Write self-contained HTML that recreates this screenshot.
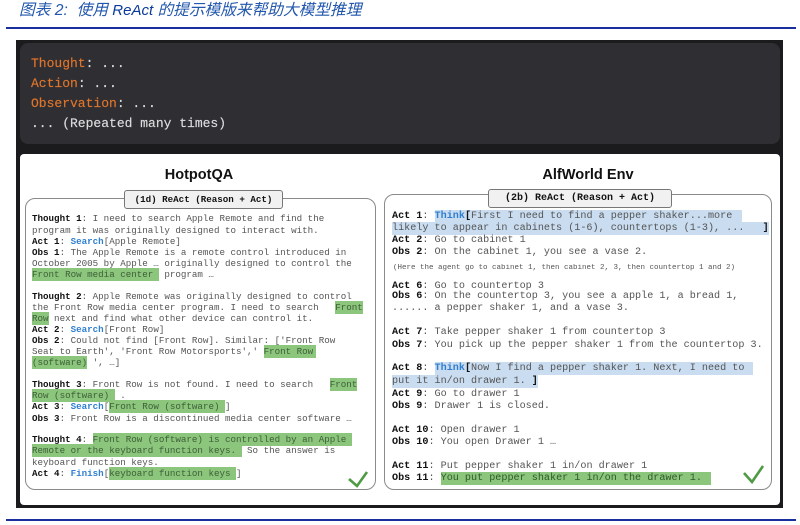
<!DOCTYPE html>
<html><head><meta charset="utf-8">
<style>
html,body{margin:0;padding:0;background:#fff}
#p{position:relative;width:800px;height:525px;overflow:hidden;background:#fff;font-family:"Liberation Mono",monospace}
#p div{position:absolute}
.t{white-space:pre;color:#555;filter:blur(.3px)}
.l{font-size:9.2px;line-height:11px;height:11px;left:32px}
.r{font-size:10.15px;line-height:12px;height:12px;left:392px}
b{color:#111}
i{font-style:normal;font-weight:bold;color:#2f7fd0}
u{text-decoration:none;background:#8cc57c;color:#3d5f38;padding:1px 0}
s{text-decoration:none;background:#c9dcf0;padding:1px 0}
.c{left:31px;font-size:13px;line-height:20px;color:#dedede;white-space:pre;-webkit-text-stroke:.15px}
.c em{font-style:normal;color:#e0752a}
</style></head><body><div id="p">
<div style="left:19px;top:0px;font:italic 15.7px/22px 'Liberation Sans','Noto Sans CJK SC',sans-serif;color:#2257ad;white-space:pre">图表 2:  使用 <span style="color:#0a3a9c;font-size:15px">ReAct</span> 的提示模版来帮助大模型推理</div>
<div style="left:6px;top:27px;width:790px;height:2px;background:#1a2f9e"></div>
<div style="left:6px;top:519px;width:790px;height:2px;background:#1a2f9e"></div>

<div style="left:16px;top:40px;width:767px;height:468px;background:#1b1b1d"></div>
<div style="left:20px;top:43px;width:760px;height:101px;background:#2e2e33;border-radius:8px"></div>
<div class="c" style="top:54px"><em>Thought</em>: ...
<em>Action</em>: ...
<em>Observation</em>: ...
... (Repeated many times)</div>

<div style="left:20px;top:154px;width:760px;height:351px;background:#fff;border-radius:4px"></div>

<div style="left:0;width:398px;top:166px;text-align:center;font:bold 14.5px/18px 'Liberation Sans',sans-serif;color:#111">HotpotQA</div>
<div style="left:398px;width:380px;top:166px;text-align:center;font:bold 14.6px/18px 'Liberation Sans',sans-serif;color:#111">AlfWorld Env</div>

<div style="left:25px;top:198px;width:349px;height:290px;border:1.5px solid #8a8a8a;border-radius:10px;box-sizing:content-box"></div>
<div style="left:384px;top:194px;width:386px;height:294px;border:1.5px solid #8a8a8a;border-radius:10px"></div>

<div style="left:124px;top:190px;width:157px;height:17px;background:#f1f1f1;border:1.5px solid #777;border-radius:3px;text-align:center;font:bold 9.2px/17px 'Liberation Mono',monospace;color:#111">(1d) ReAct (Reason + Act)</div>
<div style="left:488px;top:189px;width:182px;height:17px;background:#f1f1f1;border:1.5px solid #777;border-radius:3px;text-align:center;font:bold 10px/17px 'Liberation Mono',monospace;color:#111">(2b) ReAct (Reason + Act)</div>

<div class="t l" style="top:213px"><b>Thought 1</b>: I need to search Apple Remote and find the</div>
<div class="t l" style="top:225px">program it was originally designed to interact with.</div>
<div class="t l" style="top:236px"><b>Act 1</b>: <i>Search</i>[Apple Remote]</div>
<div class="t l" style="top:247px"><b>Obs 1</b>: The Apple Remote is a remote control introduced in</div>
<div class="t l" style="top:258px">October 2005 by Apple … originally designed to control the</div>
<div class="t l" style="top:269px"><u>Front Row media center </u> program …</div>

<div class="t l" style="top:291px"><b>Thought 2</b>: Apple Remote was originally designed to control</div>
<div class="t l" style="top:302px">the Front Row media center program. I need to search   <u>Front</u></div>
<div class="t l" style="top:313px"><u>Row</u> next and find what other device can control it.</div>
<div class="t l" style="top:324px"><b>Act 2</b>: <i>Search</i>[Front Row]</div>
<div class="t l" style="top:335px"><b>Obs 2</b>: Could not find [Front Row]. Similar: ['Front Row</div>
<div class="t l" style="top:346px">Seat to Earth', 'Front Row Motorsports',' <u style="padding-right:3px">Front Row</u></div>
<div class="t l" style="top:357px"><u>(software)</u> ', …]</div>

<div class="t l" style="top:379px"><b>Thought 3</b>: Front Row is not found. I need to search   <u>Front</u></div>
<div class="t l" style="top:390px"><u>Row (software) </u> .</div>
<div class="t l" style="top:401px"><b>Act 3</b>: <i>Search</i>[<u>Front Row (software) </u>]</div>
<div class="t l" style="top:413px"><b>Obs 3</b>: Front Row is a discontinued media center software …</div>

<div class="t l" style="top:434px"><b>Thought 4</b>: <u>Front Row (software) is controlled by an Apple </u></div>
<div class="t l" style="top:445px"><u>Remote or the keyboard function keys. </u> So the answer is</div>
<div class="t l" style="top:457px">keyboard function keys.</div>
<div class="t l" style="top:468px"><b>Act 4</b>: <i>Finish</i>[<u>keyboard function keys </u>]</div>

<div class="t r" style="top:211px"><b>Act 1</b>: <s style="padding-right:4px"><i>Think</i><b>[</b>First I need to find a pepper shaker...more </s></div>
<div class="t r" style="top:223px"><s>likely to appear in cabinets (1-6), countertops (1-3), ...   <b>]</b></s></div>
<div class="t r" style="top:235px"><b>Act 2</b>: Go to cabinet 1</div>
<div class="t r" style="top:247px"><b>Obs 2</b>: On the cabinet 1, you see a vase 2.</div>
<div class="t" style="left:393px;top:263px;font-size:7.5px;line-height:10px">(Here the agent go to cabinet 1, then cabinet 2, 3, then countertop 1 and 2)</div>
<div class="t r" style="top:281px"><b>Act 6</b>: Go to countertop 3</div>
<div class="t r" style="top:291px"><b>Obs 6</b>: On the countertop 3, you see a apple 1, a bread 1,</div>
<div class="t r" style="top:303px">...... a pepper shaker 1, and a vase 3.</div>
<div class="t r" style="top:327px"><b>Act 7</b>: Take pepper shaker 1 from countertop 3</div>
<div class="t r" style="top:340px"><b>Obs 7</b>: You pick up the pepper shaker 1 from the countertop 3.</div>
<div class="t r" style="top:363px"><b>Act 8</b>: <s style="padding-right:2px"><i>Think</i><b>[</b>Now I find a pepper shaker 1. Next, I need to </s></div>
<div class="t r" style="top:376px"><s>put it in/on drawer 1. <b>]</b></s></div>
<div class="t r" style="top:389px"><b>Act 9</b>: Go to drawer 1</div>
<div class="t r" style="top:401px"><b>Obs 9</b>: Drawer 1 is closed.</div>
<div class="t r" style="top:425px"><b>Act 10</b>: Open drawer 1</div>
<div class="t r" style="top:437px"><b>Obs 10</b>: You open Drawer 1 …</div>
<div class="t r" style="top:461px"><b>Act 11</b>: Put pepper shaker 1 in/on drawer 1</div>
<div class="t r" style="top:473px"><b>Obs 11</b>: <u style="color:#2f5a2a;padding-right:3px">You put pepper shaker 1 in/on the drawer 1. </u></div>

<svg style="position:absolute;left:0;top:0" width="800" height="525" fill="none" stroke="#4f9a45" stroke-width="2.6">
<path d="M349 479L357 486L367 472"/>
<path d="M744 473L752 482L763 466"/>
</svg>
</div></body></html>
